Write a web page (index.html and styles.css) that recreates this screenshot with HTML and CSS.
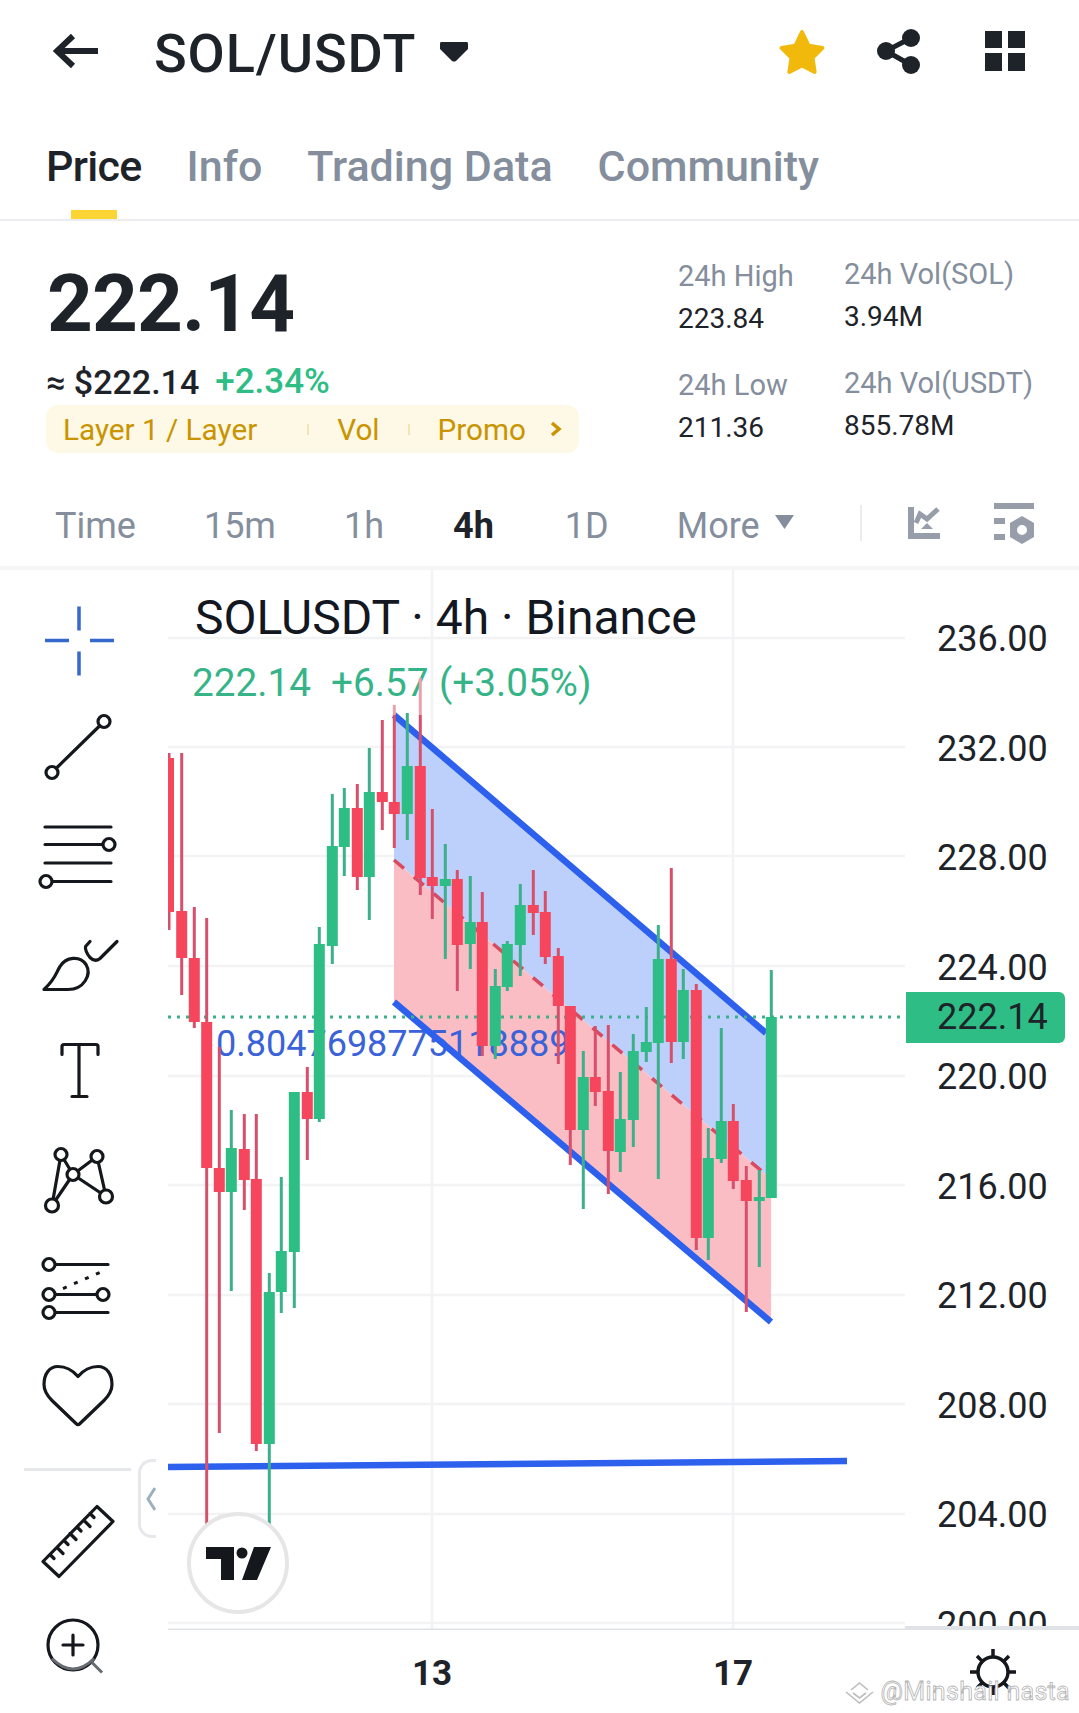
FILE: index.html
```html
<!DOCTYPE html>
<html lang="en">
<head>
<meta charset="utf-8">
<title>SOL/USDT</title>
<link rel="stylesheet" href="styles.css">
</head>
<body>
<div class="page">
  <header class="topbar">
    <svg class="ic-back" viewBox="53 32 46 38"><path d="M98 51H57M73 36L57 51L73 66"/></svg>
    <h1 class="pair">SOL/USDT</h1>
    <svg class="ic-caret" viewBox="439 42 28 20"><path d="M440 42H466Q467 42 467 44V49L455 61Q453 62 451 61L439 49V44Q439 42 440 42Z"/></svg>
    <div class="top-actions">
      <svg class="ic-star" viewBox="780 29 46 46"><path d="M803 32L809.5 45.6L823.4 47.9L813.5 57.9L815.6 71.9L803 65.5L790.4 71.9L792.5 57.9L782.6 47.9L796.5 45.6Z"/></svg>
      <svg class="ic-share" viewBox="876 28 45 47"><path d="M911 38L886 51L911 65"/><circle cx="911" cy="38" r="9"/><circle cx="886" cy="51" r="9"/><circle cx="911" cy="65" r="9"/></svg>
      <div class="ic-grid"><i></i><i></i><i></i><i></i></div>
    </div>
  </header>

  <nav class="tabs">
    <a class="tab active">Price<span class="tab-bar"></span></a>
    <a class="tab">Info</a>
    <a class="tab">Trading Data</a>
    <a class="tab">Community</a>
  </nav>

  <section class="summary">
    <div class="quote">
      <div class="last">222.14</div>
      <div class="approx"><span>≈ $222.14</span><span class="chg">+2.34%</span></div>
      <div class="tag">
        <span>Layer 1 / Layer</span><i class="tag-div tag-div-a"></i>
        <span>Vol</span><i class="tag-div"></i>
        <span>Promo</span>
        <svg class="tag-chev" viewBox="550 386 12 16"><path d="M552 388L559 394L552 400"/></svg>
      </div>
    </div>
    <div class="stat-col">
      <div class="stat"><div class="stat-k">24h High</div><div class="stat-v">223.84</div></div>
      <div class="stat"><div class="stat-k">24h Low</div><div class="stat-v">211.36</div></div>
    </div>
    <div class="stat-col stat-col-b">
      <div class="stat"><div class="stat-k">24h Vol(SOL)</div><div class="stat-v">3.94M</div></div>
      <div class="stat"><div class="stat-k">24h Vol(USDT)</div><div class="stat-v">855.78M</div></div>
    </div>
  </section>

  <div class="intervals">
    <span class="iv">Time</span>
    <span class="iv">15m</span>
    <span class="iv">1h</span>
    <span class="iv on">4h</span>
    <span class="iv">1D</span>
    <span class="iv more">More<svg class="ic-more" viewBox="772 515 19 14"><path d="M772 515H791L781.5 529Z"/></svg></span>
    <i class="iv-div"></i>
    <svg class="ic-ind" viewBox="908 505 34 34"><path class="ind-axis" d="M912 506V535H941"/><path class="ind-line" d="M917 522L921 513L928 518L939 508"/><path class="ind-tri" d="M928 522L934 528H922Z"/></svg>
    <svg class="ic-set" viewBox="994 502 42 43"><path d="M995 503H1035V509H995ZM995 518H1006V524H995ZM995 534H1006V540H995ZM1023 516L1035 523V537L1023 544L1011 537V523ZM1023 525A5 5 0 1 0 1023 535A5 5 0 1 0 1023 525Z"/></svg>
  </div>

  <main class="terminal">
    <aside class="tools">
      <svg class="tool" viewBox="0 586.5 168 107"><path class="t-blue" d="M79 606V630M79 651V675M45 640H69M90 640H114"/></svg>
      <svg class="tool" viewBox="0 693.5 168 107"><path class="t-ln" d="M100 725L56 768"/><circle class="t-ln" cx="104" cy="721" r="6"/><circle class="t-ln" cx="52" cy="772" r="6"/></svg>
      <svg class="tool" viewBox="0 800.5 168 107"><path class="t-ln" d="M45 826.5H111M45 844H103M45 862.5H111M52 881H111"/><circle class="t-ln" cx="109" cy="844" r="6"/><circle class="t-ln" cx="46" cy="881" r="6"/></svg>
      <svg class="tool" viewBox="0 907.5 168 107"><path class="t-ln" d="M44 989C56 978 56 972 60 966C66 956 80 955 86 964C92 974 84 989 68 989ZM90 941L85.500 946Q85 951 90 957Q95 962 100 958L117 941"/></svg>
      <svg class="tool" viewBox="0 1014.500 168 107"><path class="t-ln" d="M62 1054V1046Q62 1044 64 1044H96Q98 1044 98 1046V1054M79 1044V1096M72 1096H87"/></svg>
      <svg class="tool" viewBox="0 1121.500 168 107"><path class="t-ln" d="M52 1205L61 1154L73 1174L97 1156L106 1196L73 1174L52 1205"/><circle class="t-ln" cx="61" cy="1154" r="6"/><circle class="t-ln" cx="97" cy="1156" r="6"/><circle class="t-ln" cx="73" cy="1174" r="6"/><circle class="t-ln" cx="106" cy="1196" r="6.500"/><circle class="t-ln" cx="52" cy="1205" r="6.500"/></svg>
      <svg class="tool" viewBox="0 1228.500 168 107"><path class="t-ln" d="M55 1264H108M55 1294H97M55 1312H108"/><path class="t-dots" d="M63 1288L102 1271"/><circle class="t-ln" cx="49" cy="1264" r="6"/><circle class="t-ln" cx="49" cy="1294" r="6"/><circle class="t-ln" cx="103" cy="1294" r="6"/><circle class="t-ln" cx="49" cy="1312" r="6"/></svg>
      <svg class="tool" viewBox="0 1335.500 168 107"><path class="t-ln" d="M78 1376C72 1369 64 1366 58 1366C49 1366 44 1374 44 1384C44 1391 48 1396 52 1400L76 1423Q78 1425 80 1423L104 1400C108 1396 112 1391 112 1384C112 1374 107 1366 98 1366C92 1366 84 1369 78 1376Z"/></svg>
      <div class="tools-sep"></div>
      <svg class="tool" viewBox="0 1488.500 168 107"><path class="t-ln" d="M43 1562L97 1507L113 1522L59 1577ZM50 1555L54 1559M57 1548L63 1554M64 1541L68 1545M70 1534L76 1540M77 1527.500L81 1531.500M84 1521L90 1527M90 1514L94 1518"/></svg>
      <svg class="tool" viewBox="0 1595.500 168 107"><circle class="t-ln" cx="73" cy="1645.500" r="25"/><path class="t-ln" d="M63 1645.500H83M73 1635.500V1655.500"/><path class="t-grey" d="M92 1663L102 1673M52 1659Q73 1680 94 1659"/></svg>
    </aside>

    <div class="handle"><svg class="handle-chev" viewBox="146 1486 10 24"><path d="M155 1487L148 1498L155 1509"/></svg></div>

    <div class="board">
      <div class="board-main">
        <svg class="plot" viewBox="168 570 737 1060">
          <path class="grid" d="M168 638H905M168 747H905M168 856H905M168 966H905M168 1076H905M168 1185H905M168 1295H905M168 1404H905M168 1514H905M168 1623H905M432 570V1630M733 570V1630"/>
          <path class="fill-blue" d="M394 715L771 1037V1179L394 860Z"/>
          <path class="fill-pink" d="M394 860L771 1179V1322L394 1002Z"/>
          <path class="axis-line" d="M168 1630.500H905"/>
          <text class="lg-title" x="195" y="634">SOLUSDT · 4h · Binance</text>
          <text class="lg-val"><tspan x="192" y="696">222.14</tspan><tspan x="331" y="696">+6.57</tspan><tspan x="439" y="696">(+3.05%)</tspan></text>
          <text class="lg-fib" x="216" y="1056">0.8047698775118889</text>
          <path class="midline" d="M394 860L771 1179"/>
          <path class="chan" d="M394 715L766 1033M394 1002L771 1322M168 1467L847 1461"/>
          <path class="last-line" d="M168 1017H905"/>
          <path class="wick-fade" d="M394.300 705V715M420.300 678V715"/>
          <path class="wick dn" d="M169 753V930M181.700 753V995M194.300 907V1028M206.700 918V1527M219.300 1047V1433M244.300 1114V1210M256.300 1114V1451M307.300 1067V1160M357.300 784V890M382.300 720V830M394.300 715V848M420.300 715V895M432.300 809V919M457.300 870V991M482.300 892V1056M533.300 870V935M545.300 891V964M558.300 948V1064M570.300 1006V1165M595.300 1026V1106M608.300 1025V1194M671.300 868V1063M696.300 984V1250M733.300 1104V1189M746.300 1166V1312"/>
          <path class="wick up" d="M231.300 1110V1291M269.300 1273V1527M281.300 1177V1313M294.300 1092V1308M319.300 927V1122M332.300 794V964M344.300 788V876M369.300 748V920M407.300 713V840M445.300 844V959M470.300 876V969M495.300 969V1059M507.300 941V991M520.300 884V976M583.300 1051V1209M620.300 1072V1172M633.300 1034V1147M646.300 1007V1062M658.300 925V1179M683.300 969V1059M708.300 1128V1260M721.300 1028V1163M759.300 1170V1267M771.300 970V1198"/>
          <path class="body dn" d="M168.500 758V912M181.700 911V958M194.300 958V1022M206.700 1022V1168M219.300 1168V1192M244.300 1149V1180M256.300 1179V1444M307.300 1092V1119M357.300 808V877M382.300 792V802M394.300 802V814M420.300 766V878M432.300 877V886M457.300 879V945M482.300 922V1046M533.300 905V913M545.300 912V957M558.300 956V1006M570.300 1006V1130M595.300 1077V1092M608.300 1091V1151M671.300 959V1042M696.300 990V1238M733.300 1121V1181M746.300 1180V1201"/>
          <path class="body up" d="M231.300 1148V1192M269.300 1292V1444M281.300 1251V1292M294.300 1092V1252M319.300 944V1119M332.300 846V946M344.300 808V847M369.300 792V877M407.300 766V814M445.300 879V886M470.300 922V944M495.300 986V1046M507.300 944V987M520.300 905V945M583.300 1077V1130M620.300 1119V1152M633.300 1051V1120M646.300 1042V1052M658.300 959V1043M683.300 990V1042M708.300 1158V1238M721.300 1121V1159M759.300 1197V1201M771.300 1017V1198"/>
        </svg>
        <div class="prices">
          <span class="px">236.00</span>
          <span class="px">232.00</span>
          <span class="px">228.00</span>
          <span class="px">224.00</span>
          <span class="px">220.00</span>
          <span class="px">216.00</span>
          <span class="px">212.00</span>
          <span class="px">208.00</span>
          <span class="px">204.00</span>
          <span class="px">200.00</span>
          <div class="px-tag">222.14</div>
        </div>
      </div>
      <div class="timeline">
        <span class="tl">13</span>
        <span class="tl">17</span>
        <svg class="ic-sun" viewBox="968 1647 50 50"><circle cx="993" cy="1672" r="15"/><path d="M993 1649V1657M993 1687V1695M970 1672H978M1008 1672H1016M977 1656L982.500 1661.500M1009 1656L1003.500 1661.500M977 1688L982.500 1682.500M1009 1688L1003.500 1682.500"/></svg>
      </div>
    </div>

    <div class="tv-badge">
      <svg class="tv-logo" viewBox="207 1548 65 33"><path d="M207 1548H235V1581H222V1560H207ZM255 1548H272L258 1581H243Z"/><circle cx="243" cy="1554" r="5.500"/></svg>
    </div>

    <div class="watermark">
      <svg class="wm-logo" viewBox="852 1681 29 23"><path d="M858 1690L866.500 1683L875 1690M853 1692L866.500 1703L880 1692M860 1693L866.500 1698L873 1693"/></svg>
      <span>@Minshail nasta</span>
    </div>
  </main>
</div>
</body>
</html>
```
FILE: styles.css
```css
* { box-sizing: border-box; }
html, body { margin: 0; padding: 0; background: #fff; }
body { font-family: Roboto, "Liberation Sans", sans-serif; color: #1e2329; }
.page { width: 1079px; height: 1713px; overflow: hidden; }

.topbar { height: 100px; display: flex; align-items: flex-start; padding: 29px 54px 0 53px; }
.ic-back { width: 46px; height: 38px; margin-top: 3px; flex: none; }
.ic-back path { fill: none; stroke: #1e2329; stroke-width: 6; }
.pair { margin: 0 0 0 55px; font-size: 54px; line-height: 50px; font-weight: 500; letter-spacing: 0.9px; width: 286px; flex: none; white-space: nowrap; }
.ic-caret { width: 28px; height: 20px; margin-top: 13px; fill: #1e2329; }
.top-actions { margin-left: auto; display: flex; align-items: flex-start; }
.ic-star { width: 46px; height: 46px; margin-right: 1px; }
.ic-star path { fill: #f0b90b; stroke: #f0b90b; stroke-width: 4; stroke-linejoin: round; }
.ic-share { width: 45px; height: 47px; margin-left: 50px; margin-top: -1px; fill: #1e2329; }
.ic-share path { fill: none; stroke: #1e2329; stroke-width: 5; }
.ic-grid { width: 40px; height: 40px; margin-left: 64px; margin-top: 2px; display: grid; grid-template-columns: 17px 17px; grid-template-rows: 17px 18px; gap: 5px 6px; }
.ic-grid i { background: #1e2329; display: block; }

.tabs { height: 121px; padding: 41px 0 0 46px; display: flex; gap: 45px; border-bottom: 2px solid #eaecef; font-size: 43px; line-height: 50px; font-weight: 500; color: #848e9c; }
.tab { display: flex; flex-direction: column; }
.tab.active { color: #1e2329; align-items: center; letter-spacing: -0.7px; }
.tab-bar { width: 46px; height: 9px; margin-top: 19px; background: #fcd535; }

.summary { height: 245px; display: flex; }
.quote { width: 678px; padding: 43px 0 0 46px; }
.last { padding-left: 1px; font-size: 80px; line-height: 80px; font-weight: 700; letter-spacing: -0.9px; }
.approx { margin: 18px 0 0 0; font-size: 34px; line-height: 40px; display: flex; align-items: center; gap: 16px; font-weight: 500; }
.chg { color: #2ebd85; font-size: 35px; }
.tag { margin-top: 3px; width: 533px; height: 48px; padding-left: 17px; display: flex; align-items: center; background: #fef8e6; border-radius: 12px; color: #c99400; font-size: 29.7px; }
.tag-div { width: 2px; height: 11px; background: #f3e3b5; margin: 0 28px; }
.tag-div-a { margin-left: 50px; }
.tag-chev { width: 12px; height: 16px; margin-left: 24px; }
.tag-chev path { fill: none; stroke: #c99400; stroke-width: 3.500; }
.stat-col { width: 166px; padding-top: 35px; }
.stat-col-b { width: 235px; padding-top: 33px; }
.stat { margin-bottom: 26px; }
.stat-k { font-size: 29px; line-height: 40px; color: #848e9c; margin-bottom: 3px; }
.stat-v { font-size: 28px; line-height: 40px; color: #1e2329; }

.intervals { height: 104px; padding: 20px 0 0 55px; display: flex; align-items: center; font-size: 36px; color: #848e9c; border-bottom: 4px solid #f5f5f6; }
.iv { margin-right: 68px; }
.iv.on { color: #1e2329; font-weight: 700; margin: 0 71px 0 1px; }
.more { display: flex; align-items: center; margin-right: 66px; }
.ic-more { width: 19px; height: 14px; margin-left: 15px; margin-top: -8px; fill: #848e9c; }
.iv-div { width: 2px; height: 36px; background: #eaecef; margin-top: -6px; }
.ic-ind { width: 34px; height: 34px; margin: -6px 0 0 45px; }
.ind-axis, .ind-line { fill: none; stroke: #979ea9; }
.ind-axis { stroke-width: 6; }
.ind-line { stroke-width: 5; }
.ind-tri { fill: #979ea9; }
.ic-set { width: 42px; height: 43px; margin: -6px 0 0 52px; fill: #979ea9; fill-rule: evenodd; }

.terminal { position: relative; display: flex; height: 1143px; }
.tools { width: 168px; flex: none; padding-top: 16.5px; }
.tool { display: block; width: 168px; height: 107px; }
.t-blue { fill: none; stroke: #3568cc; stroke-width: 3.5; }
.t-ln { fill: #fff; stroke: #14171c; stroke-width: 3.2; stroke-linejoin: round; stroke-linecap: round; }
path.t-ln { fill: none; }
.t-dots { fill: none; stroke: #14171c; stroke-width: 3; stroke-dasharray: 4 8; }
.t-grey { fill: none; stroke: #666c72; stroke-width: 3; }
.tools-sep { height: 3px; margin: 25px 37px 17.5px 24px; background: #e5e7ea; }

.handle { position: absolute; left: 138px; top: 889px; width: 18px; height: 79px; border: 3px solid #e6e8eb; border-right: 0; border-radius: 14px 0 0 14px; display: flex; align-items: center; }
.handle-chev { width: 10px; height: 24px; margin-left: 5px; }
.handle-chev path { fill: none; stroke: #9db0bd; stroke-width: 3; }

.board { width: 911px; flex: none; display: flex; flex-direction: column; }
.board-main { display: flex; height: 1060px; position: relative; }
.plot { display: block; flex: none; width: 737px; height: 1060px; font-family: Roboto, sans-serif; }
.grid { fill: none; stroke: #f2f3f5; stroke-width: 2.500; }
.fill-blue { fill: #bdd0fb; }
.fill-pink { fill: #fbbdc4; }
.axis-line { fill: none; stroke: #dfe2e6; stroke-width: 4; }
.lg-title { font-size: 48px; fill: #131722; }
.lg-val { font-size: 38.7px; fill: #35b488; }
.lg-fib { font-size: 36px; fill: #3a62d9; }
.midline { fill: none; stroke: #d9495f; stroke-width: 3.500; stroke-dasharray: 13 13; }
.chan { fill: none; stroke: #2e60ee; stroke-width: 6.5; }
.last-line { fill: none; stroke: #3bb08a; stroke-width: 3; stroke-dasharray: 3 6; }
.wick { fill: none; stroke-width: 3; }
.wick.dn { stroke: #d6506b; }
.wick.up { stroke: #3bb08a; }
.wick-fade { fill: none; stroke: #eaa3ad; stroke-width: 3; }
.body { fill: none; stroke-width: 11; }
.body.dn { stroke: #f6465d; }
.body.up { stroke: #2ebd85; }
.prices { position: relative; flex: none; width: 174px; height: 1060px; overflow: hidden; padding: 15px 0 0 32px; display: flex; flex-direction: column; border-bottom: 4px solid #dfe2e6; font-size: 36px; color: #1e2329; }
.px { flex: none; height: 109.5px; line-height: 109.500px; }
.px-tag { position: absolute; left: 1px; top: 422px; width: 159px; height: 51px; padding-left: 31px; line-height: 51px; background: #2ebd85; border-radius: 0 6px 6px 0; }

.timeline { height: 83px; display: flex; align-items: flex-start; padding-left: 234px; }
.tl { width: 60px; text-align: center; font-size: 35px; line-height: 41px; font-weight: 700; margin-right: 241px; margin-top: 23px; color: #1e2329; }
.ic-sun { width: 50px; height: 50px; margin: 17px 0 0 -36px; }
.ic-sun circle, .ic-sun path { fill: none; stroke: #14171c; stroke-width: 3.5; }

.tv-badge { position: absolute; left: 187px; top: 942px; width: 102px; height: 102px; border: 4px solid #e6e6e7; border-radius: 50%; background: #fff; display: flex; align-items: center; justify-content: center; }
.tv-logo { width: 65px; height: 33px; fill: #14171c; }

.watermark { position: absolute; right: 9px; top: 1110px; display: flex; align-items: center; gap: 7px; }
.wm-logo { width: 29px; height: 23px; }
.wm-logo path { fill: none; stroke: #bdbdbd; stroke-width: 1.6; }
.watermark span { font-size: 25px; line-height: 24px; letter-spacing: 0.3px; color: #fff; -webkit-text-stroke: 0.8px #b4b4b4; }
```
